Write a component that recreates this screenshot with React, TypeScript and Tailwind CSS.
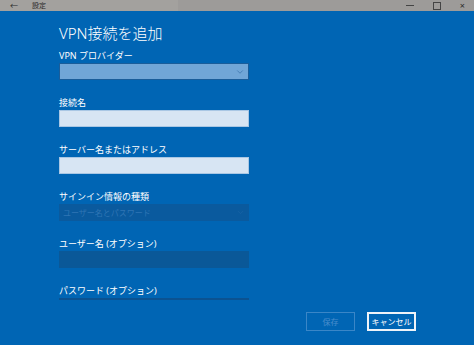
import { ChevronDown } from "lucide-react";

const font = { fontFamily: '"Noto Sans", "Noto Sans CJK JP", sans-serif' };

function Label({ text }: { text: string }) {
  return <div className="h-[12px] pt-[2px] text-[9px] leading-[12px] text-white">{text}</div>;
}

function Field({ label, children }: { label: string; children: React.ReactNode }) {
  return (
    <div className="flex flex-col">
      <Label text={label} />
      <div className="mt-[3px]">{children}</div>
    </div>
  );
}

export default function App() {
  return (
    <div className="flex h-[345px] w-[474px] flex-col overflow-hidden bg-[#0065b4]" style={font}>
      {/* タイトルバー */}
      <div className="relative h-[11px] shrink-0 bg-[#9d9b99]">
        <div className="absolute left-0 top-0 h-full w-[178px] bg-[#a3a19e]" />
        <div className="relative flex h-full items-center text-[#2b2b2b]">
          <span className="ml-[10px] text-[8px] leading-[10px]">←</span>
          <span className="ml-[14px] text-[7px] leading-[10px]">設定</span>
          <div className="ml-auto flex h-full items-center gap-[19px] pr-[9px]">
            <span className="block h-px w-[8px] bg-[#444]" />
            <span className="block h-[8px] w-[8px] border border-[#444]" />
            <span className="text-[9px] leading-[10px]">×</span>
          </div>
        </div>
      </div>

      <div className="relative flex flex-1 flex-col pl-[59px]">
        <div className="mt-[13px] h-[18px] text-[15px] font-light leading-[18px] text-white">VPN接続を追加</div>

        <div className="mt-[6px] flex w-[190px] flex-col gap-[15px]">
          <Field label="VPN プロバイダー">
            <div className="flex h-[17px] items-center justify-end border border-[#1a5d9a] bg-[#71a6d7] pr-[3px]">
              <ChevronDown size={10} strokeWidth={1.75} className="text-[#3a72ab]" />
            </div>
          </Field>
          <Field label="接続名">
            <div className="h-[17px] border border-[#a9c7e4] bg-[#d7e5f3]" />
          </Field>
          <Field label="サーバー名またはアドレス">
            <div className="h-[17px] border border-[#a9c7e4] bg-[#d7e5f3]" />
          </Field>
          <Field label="サインイン情報の種類">
            <div className="flex h-[17px] items-center justify-between bg-[#0a5a9e] px-[4px]">
              <span className="text-[8px] leading-none text-[#2f75b4]">ユーザー名とパスワード</span>
              <ChevronDown size={9} strokeWidth={1.5} className="text-[#1f68a8]" />
            </div>
          </Field>
          <Field label="ユーザー名 (オプション)">
            <div className="h-[17px] bg-[#0a5898]" />
          </Field>
          <Field label="パスワード (オプション)">
            <div className="h-[2px] bg-[#0b5291]" />
          </Field>
        </div>

        <div className="absolute bottom-[14px] right-[58px] flex gap-[12px]">
          <button className="h-[19px] w-[49px] border-[1.5px] border-[#3a86c7] text-[8px] text-[#4a8dcc]">保存</button>
          <button className="h-[19px] w-[49px] border-2 border-[#eef3f9] text-[8px] text-white">キャンセル</button>
        </div>
      </div>
    </div>
  );
}
